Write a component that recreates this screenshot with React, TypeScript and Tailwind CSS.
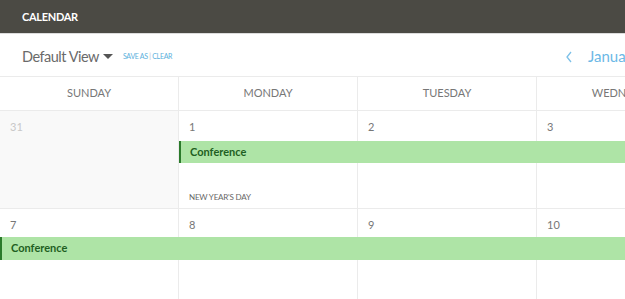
import React from "react";

const days = ["Sunday", "Monday", "Tuesday", "Wednesday", "Thursday", "Friday", "Saturday"];

function Week({
  dates,
  outside,
  eventStart,
  rows,
  notes,
}: {
  dates: number[];
  outside: boolean[];
  eventStart: number;
  rows: string;
  notes: Record<number, string>;
}) {
  return (
    <div className={`grid grid-cols-[repeat(7,179px)] ${rows} border-b border-[#ebebeb]`}>
      {dates.map((d, i) => (
        <div
          key={i}
          style={{ gridColumnStart: i + 1, gridRowStart: 1, gridRowEnd: 4 }}
          className={`border-r border-[#ebebeb] flex flex-col justify-between ${outside[i] ? "bg-[#f9f9f9]" : "bg-white"}`}
        >
          <div className={`pl-[10px] pt-[9px] text-[11px] leading-[14px] ${outside[i] ? "text-[#c8c8c8]" : "text-[#777]"}`}>{d}</div>
          {notes[i] ? (
            <div className="pl-[10px] pb-[6px] text-[8px] leading-[10px] text-[#666] uppercase tracking-[-0.2px]">{notes[i]}</div>
          ) : null}
        </div>
      ))}
      <div
        style={{ gridColumnStart: eventStart + 1, gridColumnEnd: 8, gridRowStart: 2 }}
        className="bg-[#aee4a6] border-l-2 border-[#2b7a2b] flex items-center pl-[9px] text-[11px] font-bold text-[#1f5f22] z-10"
      >
        Conference
      </div>
    </div>
  );
}

export default function App() {
  return (
    <div className="w-[625px] h-[299px] overflow-hidden bg-white" style={{ fontFamily: "Lato, 'Open Sans', sans-serif" }}>
      <div className="h-[33px] bg-[#4b4a44] flex items-center pl-[22px] pt-[2px]">
        <span className="text-white font-bold text-[11px] tracking-[-0.3px]">CALENDAR</span>
      </div>
      <div className="h-px bg-[#dcdcdc]" />
      <div className="h-[42px] flex items-center justify-between pl-[22px] pt-[3px]">
        <div className="flex items-center">
          <span className="text-[14.5px] text-[#6a6a6a] tracking-[-0.5px]">Default View</span>
          <svg width="10" height="6" viewBox="0 0 10 6" className="ml-[4px] shrink-0">
            <path d="M0 0 L10 0 L5 5 Z" fill="#555" />
          </svg>
          <span className="ml-[10px] text-[7px] text-[#5bb0dc] tracking-[-0.3px]">
            SAVE AS <span className="text-[#bbb]">|</span> CLEAR
          </span>
        </div>
        <div className="flex items-center w-[60px] shrink-0">
          <svg width="8" height="12" viewBox="0 0 8 12" className="mr-[15px] shrink-0">
            <path d="M6 1 L2 6 L6 11" fill="none" stroke="#7cc0e8" strokeWidth="1.3" />
          </svg>
          <span className="text-[15px] text-[#6bb8e6] whitespace-nowrap">January 2017</span>
        </div>
      </div>
      <div className="w-[1253px]">
        <div className="grid grid-cols-[repeat(7,179px)] h-[35px] border-t border-b border-[#ebebeb]">
          {days.map((d) => (
            <div key={d} className="border-r border-[#ebebeb] flex items-center justify-center text-[11px] text-[#777] uppercase">
              {d}
            </div>
          ))}
        </div>
        <Week
          dates={[31, 1, 2, 3, 4, 5, 6]}
          outside={[true, false, false, false, false, false, false]}
          eventStart={1}
          rows="grid-rows-[30px_22px_45px]"
          notes={{ 1: "New Year's Day" }}
        />
        <Week
          dates={[7, 8, 9, 10, 11, 12, 13]}
          outside={[false, false, false, false, false, false, false]}
          eventStart={0}
          rows="grid-rows-[28px_23px_45px]"
          notes={{}}
        />
      </div>
    </div>
  );
}
